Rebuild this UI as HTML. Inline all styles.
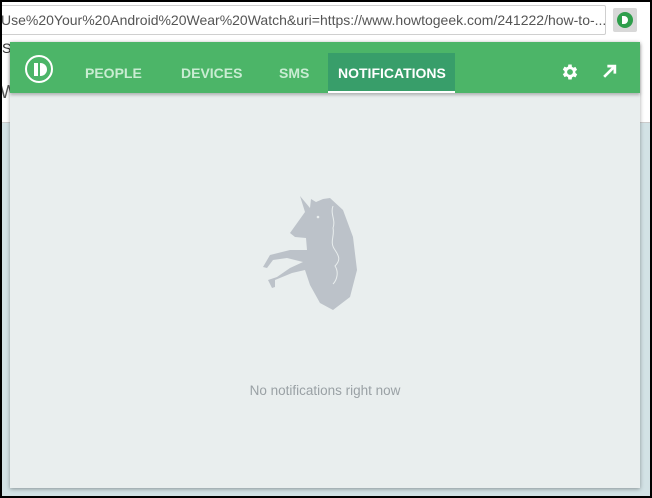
<html><body style="margin:0;width:652px;height:498px;overflow:hidden;background:#000;font-family:'Liberation Sans',sans-serif">
<div style="position:absolute;left:2px;top:2px;width:648px;height:494px;background:#fff;overflow:hidden">
<div style="position:absolute;left:-2px;top:3px;width:604px;height:28px;border:1px solid #cfcfcf;border-radius:2px;background:#fff;font-size:14px;line-height:28px;color:#555;white-space:nowrap;overflow:hidden">Use%20Your%20Android%20Wear%20Watch&amp;uri=https://www.howtogeek.com/241222/how-to-...</div>
<div style="position:absolute;left:611px;top:6px;width:24px;height:24px;background:#d8d8d8;border-radius:2px"><div style="position:absolute;left:4px;top:4px;width:16px;height:16px;border-radius:50%;background:#2e9e4b"></div><div style="position:absolute;left:9px;top:8px;width:6px;height:8px;background:#fff;border-radius:0 4px 4px 0"></div></div>
<div style="position:absolute;left:0;top:38px;font-size:14px;color:#333">S</div>
<div style="position:absolute;left:-2px;top:80px;font-size:18px;color:#555">W</div>
<div style="position:absolute;left:0;top:120px;width:648px;height:380px;background:#d2e2e5;border-top:1px solid #ccc"></div>
<div style="position:absolute;left:8px;top:40px;width:630px;height:446px;background:#e9eeee;box-shadow:0 1px 4px rgba(0,0,0,.35)">
<div style="position:absolute;left:0;top:0;width:630px;height:51px;background:#4cb568;box-shadow:0 2px 3px rgba(0,0,0,.25)">
<div style="position:absolute;left:15px;top:13px;width:24px;height:24px;border:2.5px solid #fff;border-radius:50%"></div>
<div style="position:absolute;left:24px;top:21px;width:4px;height:13px;background:#fff"></div>
<div style="position:absolute;left:30px;top:21px;width:7px;height:13px;background:#fff;border-radius:0 7px 7px 0"></div>
<div style="position:absolute;left:75px;top:23px;font-size:14px;font-weight:bold;color:#c9ecd2">PEOPLE</div>
<div style="position:absolute;left:171px;top:23px;font-size:14px;font-weight:bold;color:#c9ecd2">DEVICES</div>
<div style="position:absolute;left:269px;top:23px;font-size:14px;font-weight:bold;color:#c9ecd2">SMS</div>
<div style="position:absolute;left:318px;top:11px;width:127px;height:38px;background:#389e6a;border-bottom:2px solid #fff"><div style="position:absolute;left:10px;top:12px;font-size:14px;font-weight:bold;color:#fff">NOTIFICATIONS</div></div>
<svg style="position:absolute;left:550px;top:20px" width="20" height="20" viewBox="0 0 24 24"><path fill="#fff" d="M19.4 13a7.5 7.5 0 000-2l2.1-1.6-2-3.5-2.5 1a7 7 0 00-1.7-1L15 3h-4l-.4 2.6a7 7 0 00-1.7 1l-2.5-1-2 3.5L6.5 11a7.5 7.5 0 000 2l-2.1 1.6 2 3.5 2.5-1a7 7 0 001.7 1L11 21h4l.4-2.6a7 7 0 001.7-1l2.5 1 2-3.5zM13 15.5a3.5 3.5 0 110-7 3.5 3.5 0 010 7z" transform="translate(-1 0)"/></svg>
<svg style="position:absolute;left:592px;top:22px" width="15" height="15" viewBox="0 0 14 14"><path d="M2 12L12 2M5 2h7v7" stroke="#fff" stroke-width="2.5" fill="none"/></svg>
</div>
<div style="position:absolute;left:0;top:341px;width:630px;text-align:center;font-size:13.5px;color:#9aa1a5">No notifications right now</div>
</div>
</div>
<svg style="position:absolute;left:0;top:0" width="652" height="498" viewBox="0 0 652 498"><path fill="#bcc2c9" d="M300 196L310 208L311 199L316 202L323 199L330 198L343 210L353 237L357 270L350 297L333 310L320 303L310 285L305 270L292 273L275 280L275 287L272 288L268 280L277 277L290 268L303 262L287 258L273 260L267 268L263 267L270 255L290 250L307 250L306 238L295 237L290 233L305 212Z"/><circle cx="318" cy="217" r="1.3" fill="#e9eeee"/><path d="M333 206c-3 8 3 14 0 22 2 8-4 14 2 22 4 6 6 10 0 16 4 6 2 14-2 18" stroke="#e9eeee" stroke-width="1" fill="none"/></svg>
</body></html>
